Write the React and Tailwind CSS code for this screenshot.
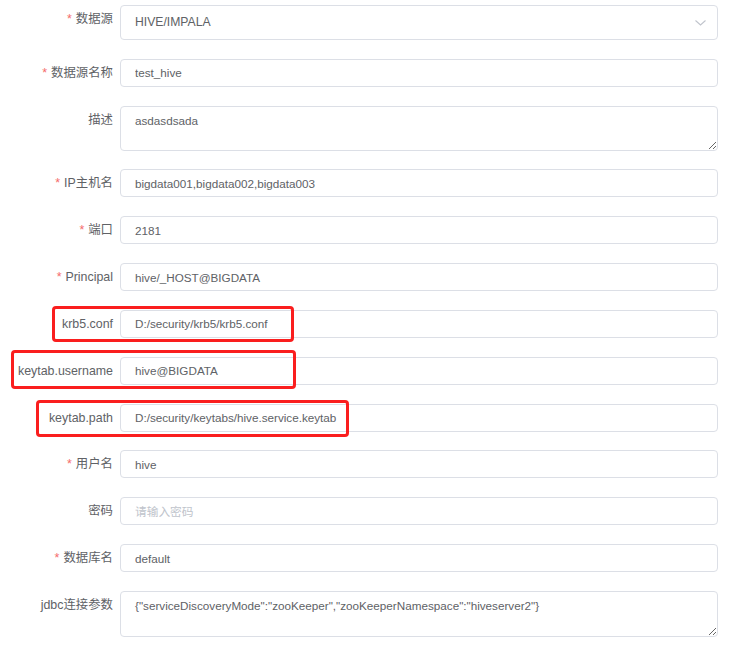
import React from 'react';

const font = { fontFamily: '"Liberation Sans", Arial, "Noto Sans CJK SC", sans-serif' };

const rows = [
  { label: '数据源', required: true, type: 'select', value: 'HIVE/IMPALA' },
  { label: '数据源名称', required: true, value: 'test_hive' },
  { label: '描述', type: 'textarea', value: 'asdasdsada', h: 'h-[45px]' },
  { label: 'IP主机名', required: true, value: 'bigdata001,bigdata002,bigdata003' },
  { label: '端口', required: true, value: '2181' },
  { label: 'Principal', required: true, value: 'hive/_HOST@BIGDATA' },
  { label: 'krb5.conf', value: 'D:/security/krb5/krb5.conf', mark: 'top-[-4px] left-[52px] w-[242px] h-[36px]' },
  { label: 'keytab.username', value: 'hive@BIGDATA', mark: 'top-[-7px] left-[11px] w-[285px] h-[39px]' },
  { label: 'keytab.path', value: 'D:/security/keytabs/hive.service.keytab', mark: 'top-[-4px] left-[36px] w-[313px] h-[37px]' },
  { label: '用户名', required: true, value: 'hive' },
  { label: '密码', placeholder: '请输入密码' },
  { label: '数据库名', required: true, value: 'default' },
  {
    label: 'jdbc连接参数',
    type: 'textarea',
    value: '{"serviceDiscoveryMode":"zooKeeper","zooKeeperNamespace":"hiveserver2"}',
    h: 'h-[46px]',
  },
];

const Field = ({ row }) => {
  if (row.type === 'select') {
    return (
      <div className="flex-1 h-[35px] border border-[#dcdfe6] rounded-[4px] flex items-center justify-between pl-[14px] pr-[11px] text-[12.2px] text-[#606266]">
        <span>{row.value}</span>
        <svg width="11" height="6" viewBox="0 0 11 6" fill="none">
          <path d="M0.5 0.5 L5.5 5 L10.5 0.5" stroke="#c0c4cc" strokeWidth="1.1" />
        </svg>
      </div>
    );
  }
  if (row.type === 'textarea') {
    return (
      <textarea
        readOnly
        value={row.value}
        style={font}
        className={`flex-1 block ${row.h} border border-[#dcdfe6] rounded-[4px] px-[14px] py-[5px] text-[11.7px] leading-[18px] text-[#606266] outline-none resize-y`}
      />
    );
  }
  return (
    <input
      readOnly
      value={row.value || ''}
      placeholder={row.placeholder}
      style={font}
      className="flex-1 h-[28px] border border-[#dcdfe6] rounded-[4px] px-[14px] text-[11.7px] text-[#606266] placeholder:text-[#c0c4cc] outline-none"
    />
  );
};

export default function App() {
  return (
    <div className="w-[731px] h-[646px] bg-white overflow-hidden pt-[5px] pr-[13px]" style={font}>
      <div className="flex flex-col gap-[18.83px]">
        {rows.map((row) => (
          <div key={row.label} className="relative flex items-start">
            <label className="w-[120px] shrink-0 pr-[7px] text-right text-[12.4px] leading-[28px] text-[#606266]">
              {row.required && <span className="text-[#f56c6c] mr-[4px]">*</span>}
              {row.label}
            </label>
            <Field row={row} />
            {row.mark && (
              <div className={`absolute ${row.mark} border-[3px] border-[#fa1e1e] rounded-[4px] pointer-events-none`} />
            )}
          </div>
        ))}
      </div>
    </div>
  );
}
